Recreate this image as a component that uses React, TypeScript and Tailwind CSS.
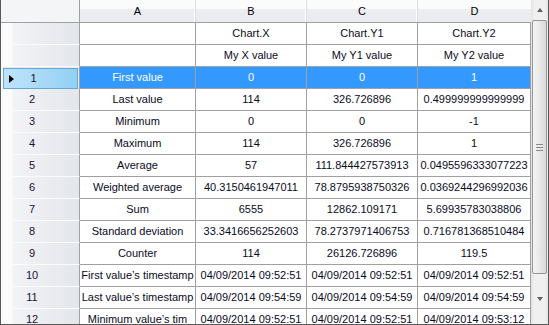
import React from "react";

type Row = { n: string; cells: string[]; selected?: boolean };

const rows: Row[] = [
  { n: "", cells: ["", "Chart.X", "Chart.Y1", "Chart.Y2"] },
  { n: "", cells: ["", "My X value", "My Y1 value", "My Y2 value"] },
  { n: "1", cells: ["First value", "0", "0", "1"], selected: true },
  { n: "2", cells: ["Last value", "114", "326.726896", "0.499999999999999"] },
  { n: "3", cells: ["Minimum", "0", "0", "-1"] },
  { n: "4", cells: ["Maximum", "114", "326.726896", "1"] },
  { n: "5", cells: ["Average", "57", "111.844427573913", "0.0495596333077223"] },
  { n: "6", cells: ["Weighted average", "40.3150461947011", "78.8795938750326", "0.0369244296992036"] },
  { n: "7", cells: ["Sum", "6555", "12862.109171", "5.69935783038806"] },
  { n: "8", cells: ["Standard deviation", "33.3416656252603", "78.2737971406753", "0.716781368510484"] },
  { n: "9", cells: ["Counter", "114", "26126.726896", "119.5"] },
  { n: "10", cells: ["First value\u2019s timestamp", "04/09/2014 09:52:51", "04/09/2014 09:52:51", "04/09/2014 09:52:51"] },
  { n: "11", cells: ["Last value\u2019s timestamp", "04/09/2014 09:54:59", "04/09/2014 09:54:59", "04/09/2014 09:54:59"] },
  { n: "12", cells: ["Minimum value\u2019s tim", "04/09/2014 09:52:51", "04/09/2014 09:52:51", "04/09/2014 09:53:12"] },
];

const colW = ["w-[116px]", "w-[111px]", "w-[111px]", "w-[113px]"];
const headers = ["A", "B", "C", "D"];

function RowHeader({ n, selected }: { n: string; selected?: boolean }) {
  if (selected) {
    return (
      <div className="w-[79px] h-[22px] shrink-0 border-r border-[#a0a0a0] bg-[linear-gradient(to_right,#fafbfc_0px,#fafbfc_2px,#e6e9ee_2px)] flex items-center py-[1px] pl-[2px]">
        <div className="relative h-[21px] w-[75px] border border-[#66a7d8] bg-[linear-gradient(to_right,#bfe4fa,#93d0f3)] flex items-center justify-center pr-[14px]">
          <div className="absolute left-[5px] top-[6px] w-0 h-0 border-y-[4px] border-y-transparent border-l-[5px] border-l-black" />
          <span className="text-[#1a1033]">{n}</span>
        </div>
      </div>
    );
  }
  return (
    <div className="w-[79px] h-[22px] shrink-0 border-r border-[#a0a0a0] border-b border-b-[#fbfbfc] bg-[linear-gradient(to_right,#fbfbfc_0px,#fbfbfc_11px,#f2f3f6_12px,#e3e6eb_100%)] flex items-center justify-center pr-[16px]">
      <span className="text-[#1a1033]">{n}</span>
    </div>
  );
}

export default function App() {
  return (
    <div className="w-[549px] h-[325px] flex bg-white border-l border-r border-b border-[#5a5a5a] overflow-hidden font-['Liberation_Sans',Arial,sans-serif] text-[11px] leading-none text-black">
      <div className="w-[530px] shrink-0 flex flex-col overflow-hidden">
        {/* column header row */}
        <div className="flex h-[23px] shrink-0 border-b border-[#a0a0a0]">
          <div className="w-[79px] shrink-0 border-r border-[#a0a0a0] bg-[#f4f5f7]" />
          {headers.map((h, i) => (
            <div
              key={h}
              className={`${colW[i]} shrink-0 flex items-center justify-center bg-[linear-gradient(#fbfbfc_0%,#fbfbfc_42%,#eceef1_42%,#e9ebee_100%)] ${i < 3 ? "border-r border-[#dadbde] shadow-[inset_-1px_0_0_#ffffff]" : ""}`}
            >
              {h}
            </div>
          ))}
        </div>
        {rows.map((r, ri) => (
          <div key={ri} className="flex h-[22px] shrink-0">
            <RowHeader n={r.n} selected={r.selected} />
            {r.cells.map((c, ci) => (
              <div
                key={ci}
                className={`${colW[ci]} shrink-0 h-[22px] border-r border-b border-[#a0a0a0] flex items-center justify-center whitespace-nowrap overflow-hidden ${r.selected ? "bg-[#3399ff] text-white" : "text-[#0a0a1e]"}`}
              >
                {c}
              </div>
            ))}
          </div>
        ))}
      </div>
      {/* vertical scrollbar */}
      <div className="w-[17px] shrink-0 flex flex-col bg-[linear-gradient(to_right,#e3e3e3,#f0f0f0_20%,#f0f0f0_80%,#e6e6e6)]">
        <div className="h-[20px] flex items-center justify-center">
          <div className="w-0 h-0 border-x-[3.5px] border-x-transparent border-b-[4px] border-b-[#606060]" />
        </div>
        <div className="mx-[1px] h-[254px] rounded-[2px] border border-[#979797] bg-[linear-gradient(to_right,#f4f4f4,#e8e8e8_50%,#d9d9d9)] flex flex-col items-center justify-center gap-[2px]">
          <div className="w-[7px] h-[1px] bg-[#8a8a8a]" />
          <div className="w-[7px] h-[1px] bg-[#8a8a8a]" />
          <div className="w-[7px] h-[1px] bg-[#8a8a8a]" />
        </div>
        <div className="flex-1 flex items-center justify-center">
          <div className="w-0 h-0 border-x-[3.5px] border-x-transparent border-t-[4px] border-t-[#606060]" />
        </div>
      </div>
    </div>
  );
}
